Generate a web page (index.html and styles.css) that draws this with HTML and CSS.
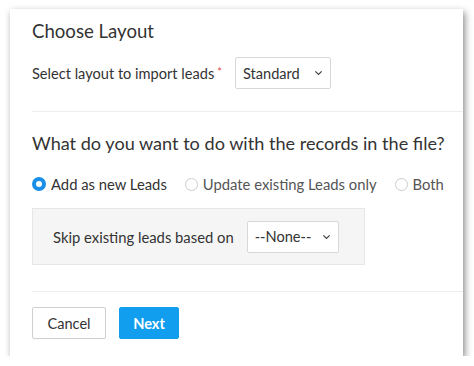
FILE: index.html
```html
<!DOCTYPE html>
<html lang="en">
<head>
  <meta charset="UTF-8" />
  <title>Choose Layout</title>
  <link rel="stylesheet" href="styles.css">
</head>
<body>
  <div class="card">
    <div class="section top">
      <h2 class="title">Choose Layout</h2>
      <div class="field-row">
        <label class="field-label">Select layout to import leads<span class="req">*</span></label>
        <div class="select select-layout">
          <span>Standard</span>
          <svg class="caret" viewBox="0 0 10 6"><path d="M1.5 1.2L5 4.6l3.5-3.4" /></svg>
        </div>
      </div>
    </div>

    <div class="section middle">
      <h3 class="question">What do you want to do with the records in the file?</h3>
      <div class="radios">
        <div class="radio checked"><span class="dot"></span>Add as new Leads</div>
        <div class="radio"><span class="dot"></span>Update existing Leads only</div>
        <div class="radio"><span class="dot"></span>Both</div>
      </div>
      <div class="skip-box">
        <span class="skip-label">Skip existing leads based on</span>
        <div class="select select-none">
          <span>--None--</span>
          <svg class="caret" viewBox="0 0 10 6"><path d="M1.5 1.2L5 4.6l3.5-3.4" /></svg>
        </div>
      </div>
    </div>

    <div class="actions">
      <button class="btn btn-cancel">Cancel</button>
      <button class="btn btn-next">Next</button>
    </div>
  </div>
</body>
</html>
```

FILE: styles.css
```css
body {
  margin: 0;
  background: #fff;
  font-family: Lato, "Open Sans", sans-serif;
  color: #333;
}

.card {
  margin: 9px 0 0 10px;
  width: 453px;
  height: 347px;
  background: #fff;
  box-shadow: 2px 3px 7px rgba(0, 0, 0, 0.45);
  display: flex;
  flex-direction: column;
}

.section {
  flex-shrink: 0;
  margin-left: 22px;
  border-bottom: 1px solid #eee;
  box-sizing: border-box;
}

.top {
  padding-top: 11px;
  height: 103px;
}

.title {
  margin: 0;
  font-size: 18.6px;
  font-weight: 400;
  line-height: 22px;
  color: #333;
}

.field-row {
  display: flex;
  align-items: center;
  margin-top: 15px;
}

.field-label {
  font-size: 14.6px;
  margin-right: 13px;
}

.req {
  color: #e44;
  font-size: 11px;
  vertical-align: top;
  margin-left: 3px;
}

.select {
  display: flex;
  align-items: center;
  justify-content: space-between;
  box-sizing: border-box;
  height: 32px;
  border: 1px solid #d8d8d8;
  border-radius: 2px;
  background: #fff;
  font-size: 14.6px;
  padding: 0 7px 0 7px;
}

.select-layout {
  width: 96px;
}

.select-none {
  width: 92px;
}

.caret {
  width: 9px;
  height: 6px;
  fill: none;
  stroke: #444;
  stroke-width: 1.4;
}

.middle {
  height: 180px;
  padding-top: 20px;
}

.question {
  margin: 0;
  font-size: 18.1px;
  font-weight: 400;
  line-height: 22px;
}

.radios {
  display: flex;
  align-items: center;
  gap: 18px;
  margin-top: 21px;
  font-size: 14.8px;
  line-height: 18px;
}

.radio {
  display: flex;
  align-items: center;
  gap: 5px;
  color: #333;
}

.radio + .radio {
  color: #555;
}

.dot {
  width: 13px;
  height: 13px;
  border-radius: 50%;
  border: 1px solid #ccc;
  box-sizing: border-box;
  background: #fff;
}

.radio.checked .dot {
  width: 14px;
  height: 14px;
  border: 4px solid #1a8fe8;
}

.skip-box {
  margin-top: 15px;
  width: 333px;
  height: 57px;
  box-sizing: border-box;
  background: #f5f5f5;
  border: 1px solid #e6e6e6;
  display: flex;
  align-items: center;
  padding-left: 20px;
  font-size: 14.8px;
}

.skip-label {
  margin-right: 13px;
}

.actions {
  display: flex;
  gap: 13px;
  margin: 15px 0 0 22px;
}

.btn {
  height: 32px;
  font-family: inherit;
  font-size: 14.6px;
  border-radius: 2px;
  cursor: pointer;
}

.btn-cancel {
  width: 74px;
  background: #fff;
  border: 1px solid #cfcfcf;
  color: #333;
}

.btn-next {
  width: 60px;
  background: #129eee;
  border: 1px solid #129eee;
  color: #fff;
  font-weight: 700;
}
```
